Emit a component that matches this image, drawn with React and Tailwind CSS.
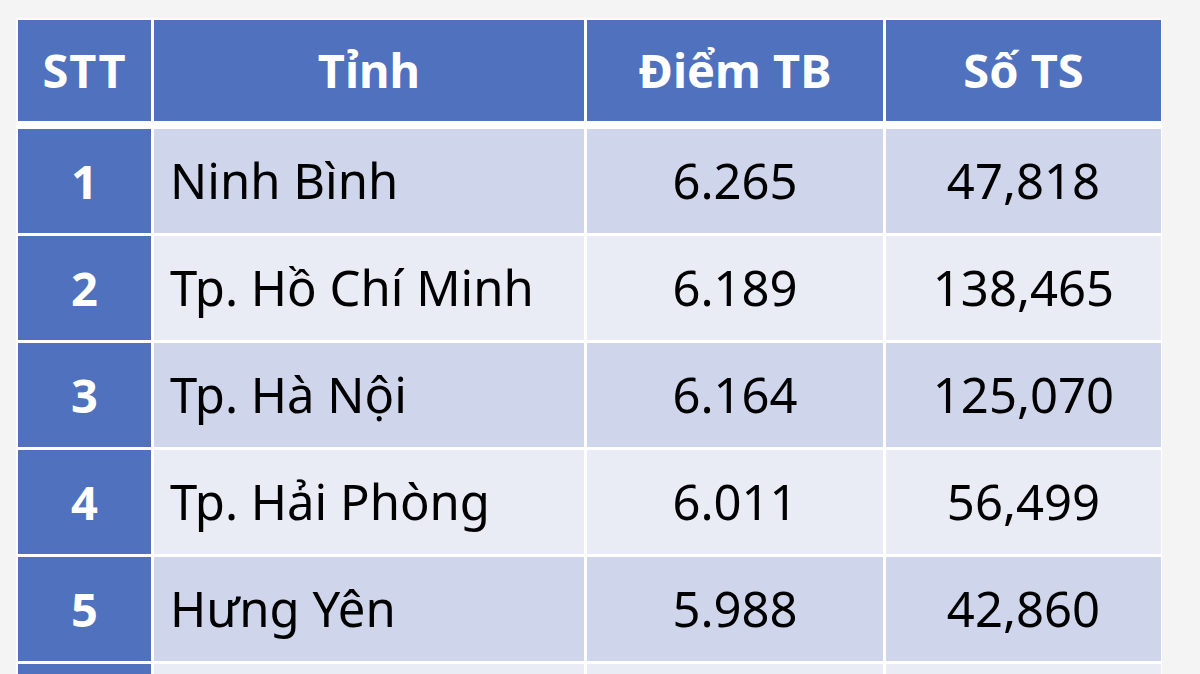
import React from "react";

const rows = [
  { stt: "1", tinh: "Ninh Bình", diem: "6.265", ts: "47,818" },
  { stt: "2", tinh: "Tp. Hồ Chí Minh", diem: "6.189", ts: "138,465" },
  { stt: "3", tinh: "Tp. Hà Nội", diem: "6.164", ts: "125,070" },
  { stt: "4", tinh: "Tp. Hải Phòng", diem: "6.011", ts: "56,499" },
  { stt: "5", tinh: "Hưng Yên", diem: "5.988", ts: "42,860" },
  { stt: "", tinh: "", diem: "", ts: "" },
];

const font = { fontFamily: '"Noto Sans", "Open Sans", sans-serif' };

const App = () => {
  return (
    <div className="w-[1200px] h-[674px] overflow-hidden bg-[#f4f4f4] pl-4 pt-[18px]" style={font}>
      <div className="w-[1146px] bg-white p-[2px]">
        <div className="grid grid-cols-[133px_430px_296px_275px] gap-x-[3px] h-[101px] text-white font-bold text-[47px]">
          <div className="bg-[#4f71be] flex items-center justify-center tracking-[1px]">STT</div>
          <div className="bg-[#4f71be] flex items-center justify-center">Tỉnh</div>
          <div className="bg-[#4f71be] flex items-center justify-center">Điểm TB</div>
          <div className="bg-[#4f71be] flex items-center justify-center">Số TS</div>
        </div>
        <div className="flex flex-col gap-y-[3px] mt-[8px]">
          {rows.map((r, i) => {
            const bg = i % 2 === 0 ? "bg-[#cfd5ea]" : "bg-[#e9ebf5]";
            return (
              <div key={i} className="grid grid-cols-[133px_430px_296px_275px] gap-x-[3px] h-[104px] text-[49px] text-black">
                <div className="bg-[#4f71be] flex items-center justify-center text-white font-bold text-[47px]">{r.stt}</div>
                <div className={`${bg} flex items-center pl-4`}>{r.tinh}</div>
                <div className={`${bg} flex items-center justify-center`}>{r.diem}</div>
                <div className={`${bg} flex items-center justify-center`}>{r.ts}</div>
              </div>
            );
          })}
        </div>
      </div>
    </div>
  );
};

export default App;
